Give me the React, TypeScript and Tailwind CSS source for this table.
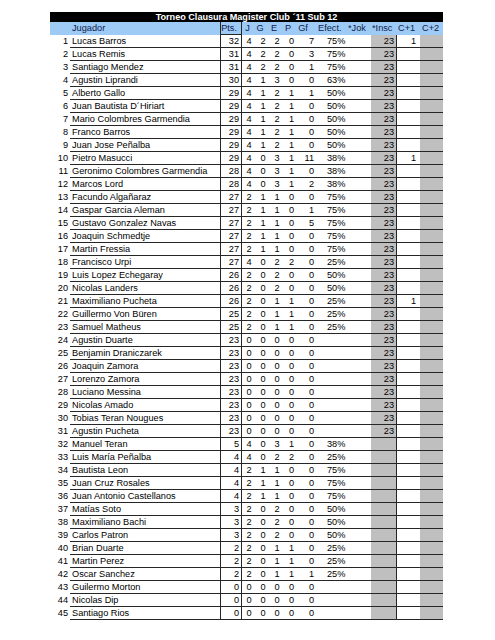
type Row = [number, string, string, string, string, string, string, string, string, string, string];

// n, jugador, pts, j, g, e, p, gf, efect, insc, c+1
const rows: Row[] = [
  [1, "Lucas Barros", "32", "4", "2", "2", "0", "7", "75%", "23", "1"],
  [2, "Lucas Remis", "31", "4", "2", "2", "0", "3", "75%", "23", ""],
  [3, "Santiago Mendez", "31", "4", "2", "2", "0", "1", "75%", "23", ""],
  [4, "Agustin Liprandi", "30", "4", "1", "3", "0", "0", "63%", "23", ""],
  [5, "Alberto Gallo", "29", "4", "1", "2", "1", "1", "50%", "23", ""],
  [6, "Juan Bautista D´Hiriart", "29", "4", "1", "2", "1", "0", "50%", "23", ""],
  [7, "Mario Colombres Garmendia", "29", "4", "1", "2", "1", "0", "50%", "23", ""],
  [8, "Franco Barros", "29", "4", "1", "2", "1", "0", "50%", "23", ""],
  [9, "Juan Jose Peñalba", "29", "4", "1", "2", "1", "0", "50%", "23", ""],
  [10, "Pietro Masucci", "29", "4", "0", "3", "1", "11", "38%", "23", "1"],
  [11, "Geronimo Colombres Garmendia", "28", "4", "0", "3", "1", "0", "38%", "23", ""],
  [12, "Marcos Lord", "28", "4", "0", "3", "1", "2", "38%", "23", ""],
  [13, "Facundo Algañaraz", "27", "2", "1", "1", "0", "0", "75%", "23", ""],
  [14, "Gaspar Garcia Aleman", "27", "2", "1", "1", "0", "1", "75%", "23", ""],
  [15, "Gustavo Gonzalez Navas", "27", "2", "1", "1", "0", "5", "75%", "23", ""],
  [16, "Joaquin Schmedtje", "27", "2", "1", "1", "0", "0", "75%", "23", ""],
  [17, "Martin Fressia", "27", "2", "1", "1", "0", "0", "75%", "23", ""],
  [18, "Francisco Urpi", "27", "4", "0", "2", "2", "0", "25%", "23", ""],
  [19, "Luis Lopez Echegaray", "26", "2", "0", "2", "0", "0", "50%", "23", ""],
  [20, "Nicolas Landers", "26", "2", "0", "2", "0", "0", "50%", "23", ""],
  [21, "Maximiliano Pucheta", "26", "2", "0", "1", "1", "0", "25%", "23", "1"],
  [22, "Guillermo Von Büren", "25", "2", "0", "1", "1", "0", "25%", "23", ""],
  [23, "Samuel Matheus", "25", "2", "0", "1", "1", "0", "25%", "23", ""],
  [24, "Agustin Duarte", "23", "0", "0", "0", "0", "0", "", "23", ""],
  [25, "Benjamin Draniczarek", "23", "0", "0", "0", "0", "0", "", "23", ""],
  [26, "Joaquin Zamora", "23", "0", "0", "0", "0", "0", "", "23", ""],
  [27, "Lorenzo Zamora", "23", "0", "0", "0", "0", "0", "", "23", ""],
  [28, "Luciano Messina", "23", "0", "0", "0", "0", "0", "", "23", ""],
  [29, "Nicolas Amado", "23", "0", "0", "0", "0", "0", "", "23", ""],
  [30, "Tobias Teran Nougues", "23", "0", "0", "0", "0", "0", "", "23", ""],
  [31, "Agustin Pucheta", "23", "0", "0", "0", "0", "0", "", "23", ""],
  [32, "Manuel Teran", "5", "4", "0", "3", "1", "0", "38%", "", ""],
  [33, "Luis María Peñalba", "4", "4", "0", "2", "2", "0", "25%", "", ""],
  [34, "Bautista Leon", "4", "2", "1", "1", "0", "0", "75%", "", ""],
  [35, "Juan Cruz Rosales", "4", "2", "1", "1", "0", "0", "75%", "", ""],
  [36, "Juan Antonio Castellanos", "4", "2", "1", "1", "0", "0", "75%", "", ""],
  [37, "Matías Soto", "3", "2", "0", "2", "0", "0", "50%", "", ""],
  [38, "Maximiliano Bachi", "3", "2", "0", "2", "0", "0", "50%", "", ""],
  [39, "Carlos Patron", "3", "2", "0", "2", "0", "0", "50%", "", ""],
  [40, "Brian Duarte", "2", "2", "0", "1", "1", "0", "25%", "", ""],
  [41, "Martin Perez", "2", "2", "0", "1", "1", "0", "25%", "", ""],
  [42, "Oscar Sanchez", "2", "2", "0", "1", "1", "1", "25%", "", ""],
  [43, "Guilermo Morton", "0", "0", "0", "0", "0", "0", "", "", ""],
  [44, "Nicolas Dip", "0", "0", "0", "0", "0", "0", "", "", ""],
  [45, "Santiago Rios", "0", "0", "0", "0", "0", "0", "", "", ""],
];

function StandingsRow({ r }: { r: Row }) {
  const [n, name, pts, j, g, e, p, gf, efect, insc, c1] = r;
  const cell = "h-[13px] border-b border-[#262626]";
  return (
    <div className="flex">
      <div className="w-[20px] h-[13px] text-right pr-[2px]">{n}</div>
      <div className={`w-[150px] pl-[2px] whitespace-nowrap ${cell}`}>{name}</div>
      <div className={`w-[22px] text-right pr-[2px] border-x ${cell}`}>{pts}</div>
      <div className={`w-[14px] text-center ${cell}`}>{j}</div>
      <div className={`w-[14px] text-center ${cell}`}>{g}</div>
      <div className={`w-[14px] text-center ${cell}`}>{e}</div>
      <div className={`w-[14px] text-center pl-[1px] ${cell}`}>{p}</div>
      <div className={`w-[18px] text-right pr-[2px] ${cell}`}>{gf}</div>
      <div className={`w-[30px] pl-[11px] ${cell}`}>{efect}</div>
      <div className={`w-[25px] ${cell}`}></div>
      <div className={`w-[26px] text-right pr-[2px] bg-[#bfbfbf] border-r ${cell}`}>{insc}</div>
      <div className={`w-[23px] text-right pr-[4px] ${cell}`}>{c1}</div>
      <div className={`w-[23px] bg-[#bfbfbf] ${cell}`}></div>
    </div>
  );
}

export default function App() {
  return (
    <div className="min-h-[640px] bg-white pt-[12px] pl-[50px] font-['Liberation_Sans',Arial,sans-serif] text-[9.2px] leading-[12px] text-black">
      <div className="w-[393px]">
        {/* title */}
        <div className="h-[10px] bg-black text-white font-bold text-[9.1px] leading-[10px] text-center">
          Torneo Clausura Magister Club ´11 Sub 12
        </div>

        {/* header */}
        <div className="flex h-[13px] bg-[#9dcbf6] text-[#10204a] leading-[13px]">
          <div className="w-[20px]"></div>
          <div className="w-[150px] pl-[2px]">Jugador</div>
          <div className="w-[22px] h-[13px] text-right pr-[4px] border-x border-t-0 border-b border-[#262626]">
            Pts.
          </div>
          <div className="w-[14px] text-center pr-[3px]">J</div>
          <div className="w-[14px] text-center pr-[6px]">G</div>
          <div className="w-[14px] text-center pr-[6px]">E</div>
          <div className="w-[14px] text-center pr-[6px]">P</div>
          <div className="w-[18px] text-center pr-[8px]">Gf</div>
          <div className="w-[30px] pl-[2px] whitespace-nowrap">Efect.</div>
          <div className="w-[25px] pl-[2px]">*Jok</div>
          <div className="w-[26px] pl-[1px]">*Insc</div>
          <div className="w-[23px] pl-[1px]">C+1</div>
          <div className="w-[23px] pl-[2px]">C+2</div>
        </div>

        {rows.map((r) => (
          <StandingsRow key={r[0]} r={r} />
        ))}
      </div>
    </div>
  );
}
